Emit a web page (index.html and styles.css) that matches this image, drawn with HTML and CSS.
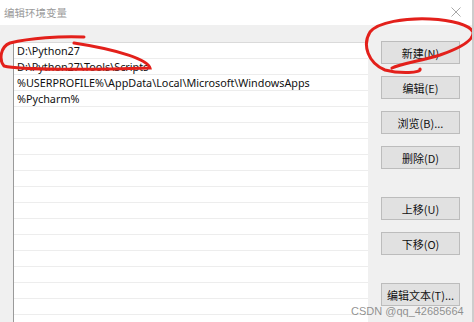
FILE: index.html
```html
<!DOCTYPE html>
<html lang="zh-CN">
<head>
    <meta charset="UTF-8">
    <meta name="viewport" content="width=device-width, initial-scale=1.0">
    <title>编辑环境变量</title>
    <link rel="stylesheet" href="styles.css">
</head>
<body>
    <div class="window">
        <div class="titlebar">
            <span class="title">编辑环境变量</span>
            <svg class="close" width="10" height="10" viewBox="0 0 10 10">
                <path d="M0.5 0.5 L9.5 9.5 M9.5 0.5 L0.5 9.5" stroke="#a8a8a8" stroke-width="1" fill="none"/>
            </svg>
        </div>

        <div class="content">
            <ul class="pathlist">
                <li>D:\Python27</li>
                <li>D:\Python27\Tools\Scripts</li>
                <li>%USERPROFILE%\AppData\Local\Microsoft\WindowsApps</li>
                <li>%Pycharm%</li>
            </ul>

            <div class="actions">
                <button class="button">新建(N)</button>
                <button class="button">编辑(E)</button>
                <button class="button">浏览(B)...</button>
                <button class="button">删除(D)</button>
                <button class="button spaced">上移(U)</button>
                <button class="button">下移(O)</button>
                <button class="button spaced">编辑文本(T)...</button>
            </div>
        </div>

        <!-- red pen marks drawn over the dialog -->
        <svg class="marks" width="474" height="322" viewBox="0 0 474 322">
            <path d="M84 37 C60 36 30 38 10 43 C0 47 -1 60 4 66 C20 70 90 70 150 68 C148 60 120 50 74 43"
                  stroke="#e3201b" stroke-width="3" fill="none" stroke-linecap="round"/>
            <path d="M420 69 C422 73 400 74 385 70 C368 63 362 45 370 32 C378 22 405 18 430 19 C452 20 470 25 473 32 C474 40 460 48 440 55 C420 61 400 64 392 68"
                  stroke="#e3201b" stroke-width="3" fill="none" stroke-linecap="round"/>
        </svg>

        <div class="watermark">CSDN @qq_42685664</div>
    </div>
</body>
</html>
```

FILE: styles.css
```css
body {
    margin: 0;
    overflow: hidden;
    font-family: "Noto Sans", "Noto Sans CJK SC", sans-serif;
}

.window {
    position: relative;
    width: 472px;
    height: 322px;
    border-right: 2px solid #cdcdcd;
    background-color: #f0f0f0;
    overflow: hidden;
}

.titlebar {
    height: 25px;
    background-color: #ffffff;
    display: flex;
    align-items: center;
    justify-content: space-between;
    padding: 0 11px 0 4px;
}

.title {
    font-family: "Noto Sans CJK SC", sans-serif;
    font-size: 10.5px;
    color: #9a9a9a;
}

.close {
    margin-top: -1px;
}

.content {
    display: flex;
    padding: 17px 0 0 13px;
}

.pathlist {
    list-style: none;
    margin: 0;
    padding: 0;
    width: 354px;
    height: 300px;
    border-left: 1px solid #9a9a9a;
    border-top: 1px solid #dadada;
    background: repeating-linear-gradient(to bottom, #ffffff 0 15px, #ededed 15px 16px);
}

.pathlist li {
    height: 16px;
    line-height: 16px;
    padding-left: 3px;
    font-size: 10.8px;
    color: #111;
    white-space: nowrap;
}

.actions {
    display: flex;
    flex-direction: column;
    gap: 12px;
    margin-left: 13px;
    margin-top: -1px;
}

.button {
    width: 79px;
    height: 23px;
    padding: 0;
    background-color: #e1e1e1;
    border: 1px solid #bcbcbc;
    font-family: "Noto Sans CJK SC", sans-serif;
    font-size: 11px;
    color: #111;
}

.spaced {
    margin-top: 16px;
}

.marks {
    position: absolute;
    left: 0;
    top: 0;
    pointer-events: none;
}

.watermark {
    position: absolute;
    left: 351px;
    top: 305px;
    font-family: "Liberation Sans", sans-serif;
    font-size: 11px;
    color: rgba(110, 110, 110, 0.75);
    white-space: nowrap;
}
```
